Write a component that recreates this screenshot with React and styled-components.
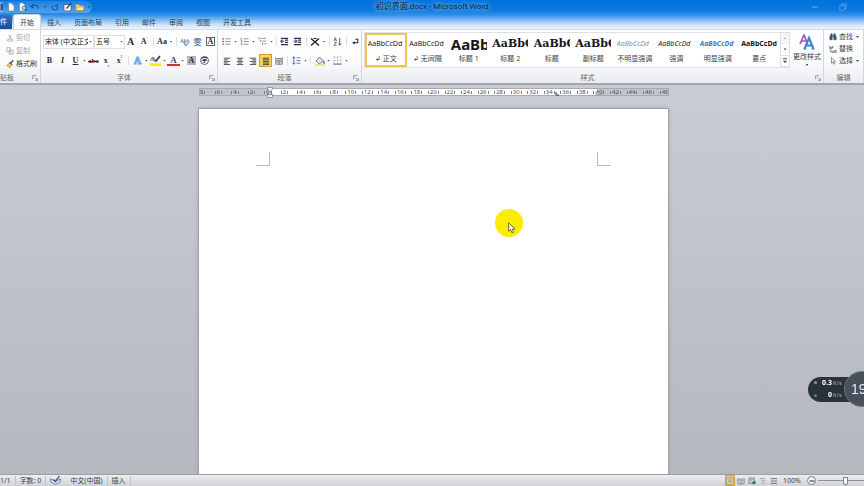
import React from 'react';
import styled, { createGlobalStyle, css } from 'styled-components';

const GlobalStyles = createGlobalStyle`
  * {
    box-sizing: border-box;
    margin: 0;
    padding: 0;
  }
  body {
    font-family: 'Noto Sans', 'Noto Sans CJK SC', sans-serif;
    font-size: 7px;
    line-height: 10px;
    color: #3b3f46;
    overflow: hidden;
  }
  button, select, input {
    font: inherit;
    color: inherit;
    border: none;
    background: none;
  }
  svg {
    display: block;
    flex: none;
  }
`

const TABS = ['插入', '页面布局', '引用', '邮件', '审阅', '视图', '开发工具'];

const STYLES = [
  { name: '↲ 正文', sample: 'AaBbCcDd', active: true },
  { name: '↲ 无间隔', sample: 'AaBbCcDd' },
  { name: '标题 1', sample: 'AaBb', look: 'heading' },
  { name: '标题 2', sample: 'AaBbC', look: 'serif' },
  { name: '标题', sample: 'AaBbC', look: 'serif' },
  { name: '副标题', sample: 'AaBbC', look: 'serif' },
  { name: '不明显强调', sample: 'AaBbCcDd', look: 'subtle' },
  { name: '强调', sample: 'AaBbCcDd', look: 'emphasis' },
  { name: '明显强调', sample: 'AaBbCcDd', look: 'intense' },
  { name: '要点', sample: 'AaBbCcDd', look: 'strong' },
];

const RULER = Array.from({ length: 29 }, (_, i) => Math.abs(i * 2 - 8));

/* Icons */

const Icon = ({ size = 10, children }) => (
  <svg width={size} height={size} viewBox="0 0 10 10" fill="none" stroke="#3f444c" strokeWidth="1" aria-hidden="true">
    {children}
  </svg>
)

const WordIcon = () => (
  <Icon><path d="M0 1h6v8H0z" fill="#2b579a" stroke="#fff" strokeWidth=".6" /></Icon>
)
const PageIcon = () => (
  <Icon><path d="M2.500 1h3.500l2 2v6H2.500z" fill="#fff" stroke="#6482a8" strokeWidth=".7" /><path d="M6 1v2h2" stroke="#6482a8" strokeWidth=".6" /></Icon>
)
const PreviewIcon = () => (
  <Icon>
    <path d="M1.500 1H5l2 2v6H1.500z" fill="#fff" stroke="#6482a8" strokeWidth=".7" />
    <circle cx="6" cy="6" r="1.800" fill="#d8ebff" stroke="#2c4a78" strokeWidth=".8" />
    <path d="M7.200 7.200L9 9" stroke="#2c4a78" />
  </Icon>
)
const UndoIcon = () => (
  <Icon><path d="M3 2L1 4.500l3 1.500M1.500 4.400C4 2.500 8.500 2.500 8 7" stroke="#1d4da6" strokeWidth="1.100" /></Icon>
)
const RedoIcon = () => (
  <Icon><path d="M3 3.500C1.500 6 3 8 5 8s3.500-2 2-4.500M7.500 2L7 4.200l-2-.4" stroke="#1d4da6" strokeWidth="1.100" /></Icon>
)
const EditIcon = () => (
  <Icon><path d="M1 2.500h7v6.500H1z" fill="#fff" stroke="#4a5f7d" strokeWidth=".8" /><path d="M3.500 6.500L8.500 1" stroke="#2d4460" strokeWidth="1.300" /><path d="M3 7.500l1-1.500" stroke="#d58a22" /></Icon>
)
const FolderIcon = () => (
  <Icon><path d="M.8 8.500V2.500h3l1 1h3v1.500" fill="#f6d983" stroke="#b98a2d" strokeWidth=".6" /><path d="M.8 8.500L2.500 5h7L8 8.500z" fill="#fde9a5" stroke="#b98a2d" strokeWidth=".6" /></Icon>
)
const CutIcon = () => (
  <Icon size={8}><path d="M3 1l3.500 6M7 1L3.500 7" stroke="#a4a7ad" /><circle cx="2.800" cy="8" r="1.300" stroke="#a4a7ad" /><circle cx="7.200" cy="8" r="1.300" stroke="#a4a7ad" /></Icon>
)
const CopyIcon = () => (
  <Icon size={8}><path d="M1 1h4.500v5H1zM4 4h5v5H4z" fill="#fff" stroke="#a4a7ad" /><path d="M5 6h3M5 7.500h3" stroke="#c0c2c7" strokeWidth=".6" /></Icon>
)
const BrushIcon = () => (
  <Icon size={8}><path d="M6 4L9 0" stroke="#45474b" strokeWidth="1.600" /><path d="M1 7l4-4 2.500 2L5 9.500 3.500 8.500z" fill="#f1cf57" stroke="#806422" strokeWidth=".7" /><path d="M4 3l4 3" stroke="#373a3f" strokeWidth="1.200" /></Icon>
)
const EraserIcon = () => (
  <Icon><path d="M4 6l3-3.500 2.500 2L6.500 8.500H5z" fill="#b8d1ee" stroke="#5d7fae" strokeWidth=".8" /><path d="M.8 6l1.400-4 1.400 4M1.300 4.500h1.800M4.500 2v3" stroke="#7c8492" strokeWidth=".8" /></Icon>
)
const HighlightIcon = () => (
  <Icon size={11}><path d="M0 7.500h10V10H0z" fill="#ffed00" stroke="none" /><path d="M5 6L9 1" stroke="#39404c" strokeWidth="1.600" /><path d="M.5 5.500C2 1 3 1 2.500 5M3.500 2v3.500c2 0 2-2 0-2" stroke="#50545b" strokeWidth=".8" /></Icon>
)
const BulletsIcon = () => (
  <Icon size={9}><path d="M3.500 2h6M3.500 5h6M3.500 8h6" stroke="#888c94" /><path d="M.5 2h1.500M.5 5h1.500M.5 8h1.500" stroke="#344b74" strokeWidth="1.400" /></Icon>
)
const NumbersIcon = () => (
  <Icon size={9}><path d="M4 2h5.500M4 5h5.500M4 8h5.500" stroke="#888c94" /><path d="M1.300 .8v2.400M.7 4.200h1.200v2M.7 7.500h1.300V9.500" stroke="#4b5a78" strokeWidth=".8" /></Icon>
)
const MultiIcon = () => (
  <Icon size={9}><path d="M3 1.500h6M5 4.500h4M7 7.500h2.500" stroke="#888c94" /><path d="M1.200 .5v2M3.200 3.500v2M5.200 6.500v2" stroke="#4b5a78" /></Icon>
)
const IndentIcon = ({ more }) => (
  <Icon size={9}>
    <path d="M1 1.500h8M5.500 3.500H9M5.500 6H9M1 8.500h8" stroke="#2f343c" strokeWidth="1.200" />
    <path d={more ? 'M.5 4.800h3M2.500 3l2 1.800-2 1.800' : 'M4.800 4.800h-3M2.800 3l-2 1.800 2 1.800'} stroke="#2d4f8d" strokeWidth="1.200" />
  </Icon>
)
const AsianIcon = () => (
  <Icon><path d="M1 1.500l8 7M9 1.500l-8 7" stroke="#24272c" strokeWidth="1.500" /><path d="M3.500 1.500h3" stroke="#24272c" /></Icon>
)
const SortIcon = () => (
  <Icon size={9}><path d="M1 4.500L2.500.8 4 4.500M1.500 3.200h2M1 6h3L1 9.300h3" stroke="#4a5c7c" strokeWidth=".9" /><path d="M7.500 1v8M6 7.500L7.500 9 9 7.500" /></Icon>
)
const MarkIcon = () => (
  <Icon size={8}><path d="M5.500 1.500h3V6H3" stroke="#24272c" strokeWidth="1.300" /><path d="M4.500 4L1.500 6l3 2.200z" fill="#24272c" stroke="none" /></Icon>
)
const LINES = {
  left: 'M1 1.500h8M1 3.500h5M1 5.500h8M1 7.500h5M1 9.300h8',
  center: 'M1 1.500h8M2.500 3.500h5M1 5.500h8M2.500 7.500h5M1 9.300h8',
  right: 'M1 1.500h8M4 3.500h5M1 5.500h8M4 7.500h5M1 9.300h8',
  justify: 'M1 1.500h8M1 3.500h8M1 5.500h8M1 7.500h8M1 9.300h8',
};
const AlignIcon = ({ kind }) => <Icon size={8}><path d={LINES[kind]} stroke="#3a3d42" strokeWidth="1.100" /></Icon>
const SpreadIcon = () => (
  <Icon size={8}><path d="M1 .5v9M9 .5v9M2 2h6M2 4h6M2 6h6M2 9h6" stroke="#4b4f56" /><path d="M3.500 7.500h3" stroke="#3565ad" /></Icon>
)
const SpacingIcon = () => (
  <Icon size={9}><path d="M5 2h4.500M5 5h4.500M5 8h4.500" stroke="#70747c" /><path d="M2 1v8M.5 2.500L2 .8l1.500 1.700M.5 7.500L2 9.200l1.500-1.700" stroke="#33589b" strokeWidth=".9" /></Icon>
)
const FillIcon = () => (
  <Icon><path d="M1 5l3.500-4L8 4.500 4.500 8z" fill="#dce5f1" stroke="#4f617d" strokeWidth=".8" /><path d="M8 5c2 2 1 3 .5 3" stroke="#2f61b0" strokeWidth="1.200" /><path d="M0 9h9.500" stroke="#f1d77a" strokeWidth="1.500" /></Icon>
)
const BordersIcon = () => (
  <Icon size={9}><path d="M1 1h8v8M1 1v8M5 1v8M1 5h8" stroke="#a7abb3" strokeDasharray="1 .7" strokeWidth=".9" /><path d="M.5 9h9" stroke="#4b4f56" /></Icon>
)
const FindIcon = () => (
  <Icon size={8}><path d="M1 8.500V5l1.500-4h1.500v7.500zM6 8.500V1h1.500L9 5v3.500z" fill="#3a5480" stroke="#24416e" strokeWidth=".6" /><path d="M4 4h2" stroke="#24416e" strokeWidth="1.600" /></Icon>
)
const ReplaceIcon = () => (
  <Icon size={8}><path d="M1 1v4h2.500V3H1M5.500 1.500H4.500v2h1M2 6.500v2h3M4 7l1.500 1.500L4 9.800M6.500 7v2.500H9V7z" stroke="#4b5567" strokeWidth=".9" /></Icon>
)
const SelectIcon = () => (
  <Icon size={8}><path d="M3 .8v7l1.800-1.500L6 9l1.200-.6L6 5.800h2.200z" fill="#fff" stroke="#4b5567" strokeWidth=".8" /></Icon>
)
const LauncherIcon = () => (
  <Icon size={6}><path d="M1 7V1h6" stroke="#6d7179" /><path d="M4 4l5 5M9 5v4H5" stroke="#6d7179" /></Icon>
)
const ProofIcon = () => (
  <Icon size={11}><path d="M.5 6L5 8.500 9.500 6V3.500L5 6 .5 3.500z" fill="#e8edf6" stroke="#49658f" strokeWidth=".7" /><path d="M3 4l1.800 1.800L8.500 1" stroke="#2a5eb2" strokeWidth="1.200" /></Icon>
)
const PrintViewIcon = () => <Icon size={8}><path d="M1 1h8v8H1z" fill="#f6efd8" stroke="#7b7769" /><path d="M2.500 3.500h5M2.500 5h5M2.500 6.500h5" stroke="#6b6a63" strokeWidth=".8" /></Icon>
const ReadingIcon = () => <Icon size={8}><path d="M1 2l4 1 4-1v6L5 9 1 8zM5 3v6M2 4.500l2 .5M6 5l2-.5" stroke="#7a7e86" /></Icon>
const WebIcon = () => <Icon size={8}><path d="M1 1h7v7H1zM2 3h5M2 5h3" stroke="#7a7e86" /><circle cx="7.500" cy="7" r="2" fill="#2f8a62" stroke="#2c6c8d" strokeWidth=".6" /></Icon>
const OutlineIcon = () => <Icon size={8}><path d="M1 2h6M3 5h5M3 8h4" stroke="#8c9098" /></Icon>
const DraftIcon = () => <Icon size={8}><path d="M1 2h8M1 5h8M1 8h8" stroke="#6d7179" strokeWidth="1.200" /></Icon>

/* Ribbon pieces */

const Tool = ({ label, children, caret, ...rest }) => (
  <ToolButton aria-label={label} {...rest}>
    <Glyph>{children}</Glyph>
    {caret && <Caret />}
  </ToolButton>
)

const Group = ({ title, launcher, children, ...rest }) => (
  <GroupBox aria-label={title} {...rest}>
    <GroupBody>{children}</GroupBody>
    <GroupFooter $launcher={launcher}>
      <span>{title}</span>
      {launcher && <Launcher aria-label={`${title}选项`}><LauncherIcon /></Launcher>}
    </GroupFooter>
  </GroupBox>
)

const Clipboard = () => (
  <GroupBox aria-label="剪贴板" $width={41}>
    <CommandList $indent={6} $gap={3}>
      <Command disabled><CutIcon />剪切</Command>
      <Command disabled><CopyIcon />复制</Command>
      <Command><BrushIcon />格式刷</Command>
    </CommandList>
    <GroupFooter $align="flex-start">
      <span>贴板</span>
      <Launcher aria-label="剪贴板选项"><LauncherIcon /></Launcher>
    </GroupFooter>
  </GroupBox>
)

const FontGroup = () => (
  <Group title="字体" launcher $width={177}>
    <ToolRow>
      <Combo $width={51}>
        <select aria-label="字体"><option>宋体 (中文正文)</option></select>
        <Caret />
      </Combo>
      <Combo $width={31}>
        <select aria-label="字号"><option>五号</option></select>
        <Caret />
      </Combo>
      <Tool label="增大字体"><Letter $size={10}>A<sup>ˆ</sup></Letter></Tool>
      <Tool label="缩小字体"><Letter $size={8}>A<sup>ˇ</sup></Letter></Tool>
      <Divider />
      <Tool label="更改大小写" caret><Letter $size={8}>Aa</Letter></Tool>
      <Divider />
      <Tool label="清除格式"><EraserIcon /></Tool>
      <Tool label="拼音指南"><Pinyin>雯</Pinyin></Tool>
      <Tool label="字符边框"><Boxed>A</Boxed></Tool>
    </ToolRow>
    <ToolRow>
      <Tool label="加粗"><Letter $size={8}>B</Letter></Tool>
      <Tool label="倾斜"><Letter $size={8} $italic>I</Letter></Tool>
      <Tool label="下划线" caret><Letter $size={8} $line="underline">U</Letter></Tool>
      <Tool label="删除线"><Letter $size={7} $line="line-through">abc</Letter></Tool>
      <Tool label="下标"><Letter $size={8}>x<sub>₂</sub></Letter></Tool>
      <Tool label="上标"><Letter $size={8}>x<sup>²</sup></Letter></Tool>
      <Divider />
      <Tool label="文本效果" caret><Letter $size={10} $effect>A</Letter></Tool>
      <Tool label="突出显示" caret><HighlightIcon /></Tool>
      <Tool label="字体颜色" caret><Letter $size={9} $bar="#e3282e">A</Letter></Tool>
      <Tool label="字符底纹"><Boxed $shaded>A</Boxed></Tool>
      <Tool label="带圈字符"><Boxed $round>字</Boxed></Tool>
    </ToolRow>
  </Group>
)

const ParagraphGroup = () => (
  <Group title="段落" launcher $width={144}>
    <ToolRow>
      <Tool label="项目符号" caret><BulletsIcon /></Tool>
      <Tool label="编号" caret><NumbersIcon /></Tool>
      <Tool label="多级列表" caret><MultiIcon /></Tool>
      <Divider />
      <Tool label="减少缩进量"><IndentIcon /></Tool>
      <Tool label="增加缩进量"><IndentIcon more /></Tool>
      <Divider />
      <Tool label="中文版式" caret><AsianIcon /></Tool>
      <Divider />
      <Tool label="排序"><SortIcon /></Tool>
      <Divider />
      <Tool label="显示编辑标记"><MarkIcon /></Tool>
    </ToolRow>
    <ToolRow>
      <Tool label="左对齐"><AlignIcon kind="left" /></Tool>
      <Tool label="居中"><AlignIcon kind="center" /></Tool>
      <Tool label="右对齐"><AlignIcon kind="right" /></Tool>
      <Tool label="两端对齐" $active><AlignIcon kind="justify" /></Tool>
      <Tool label="分散对齐"><SpreadIcon /></Tool>
      <Divider />
      <Tool label="行距" caret><SpacingIcon /></Tool>
      <Divider />
      <Tool label="底纹" caret><FillIcon /></Tool>
      <Tool label="边框" caret><BordersIcon /></Tool>
    </ToolRow>
  </Group>
)

const StylesGroup = () => (
  <Group title="样式" launcher $grow>
    <StylesBody>
      <Gallery>
        {STYLES.map(({ name, sample, look, active }) => (
          <StyleCard key={name} $active={active}>
            <Sample $look={look}>{sample}</Sample>
            <StyleName>{name}</StyleName>
          </StyleCard>
        ))}
        <Scroller>
          <ScrollButton aria-label="上一行" disabled><Caret $up /></ScrollButton>
          <ScrollButton aria-label="下一行"><Caret /></ScrollButton>
          <ScrollButton aria-label="更多样式"><Caret $more /></ScrollButton>
        </Scroller>
      </Gallery>
      <ChangeStyles>
        <svg width="16" height="16" viewBox="0 0 16 16" fill="none" aria-hidden="true">
          <path d="M1 10L5 1l3.500 9M2.500 7h5" stroke="#a45ab4" strokeWidth="1.700" />
          <path d="M5.500 15l4.500-11 4.500 11M7 11.500h6" stroke="#3f7fd0" strokeWidth="2" />
          <path d="M4.500 15h3M12.500 15h3" stroke="#3f7fd0" />
        </svg>
        更改样式
        <Caret />
      </ChangeStyles>
    </StylesBody>
  </Group>
)

const EditingGroup = () => (
  <GroupBox aria-label="编辑" $width={40}>
    <CommandList $indent={5} $gap={2}>
      <Command><FindIcon />查找<Caret /></Command>
      <Command><ReplaceIcon />替换</Command>
      <Command><SelectIcon />选择<Caret /></Command>
    </CommandList>
    <GroupFooter>
      <span>编辑</span>
    </GroupFooter>
  </GroupBox>
)

const App = () => (
  <>
    <GlobalStyles />
    <Window>
      <Header>
        <TitleBar>
          <QuickAccess>
            <Quick aria-label="Word"><WordIcon /></Quick>
            <Quick aria-label="新建"><PageIcon /></Quick>
            <Quick aria-label="打印预览"><PreviewIcon /></Quick>
            <Quick aria-label="撤消"><UndoIcon /></Quick>
            <Caret />
            <Quick aria-label="恢复"><RedoIcon /></Quick>
            <Quick aria-label="编辑"><EditIcon /></Quick>
            <Quick aria-label="打开"><FolderIcon /></Quick>
            <Caret />
          </QuickAccess>
          <Title>初识界面.docx - Microsoft Word</Title>
          <WindowButtons>
            <WindowButton aria-label="最小化"><Icon size={8}><path d="M1 5h8" stroke="#78baf5" /></Icon></WindowButton>
            <WindowButton aria-label="还原"><Icon size={8}><path d="M1 3h6v6H1zM3 3V1h6v6H7" stroke="#5aa9ef" /></Icon></WindowButton>
          </WindowButtons>
        </TitleBar>
        <TabBar>
          <FileTab>件</FileTab>
          <Tab $selected>开始</Tab>
          {TABS.map((tab) => <Tab key={tab}>{tab}</Tab>)}
        </TabBar>
      </Header>
      <Ribbon>
        <Clipboard />
        <FontGroup />
        <ParagraphGroup />
        <StylesGroup />
        <EditingGroup />
      </Ribbon>
      <Workspace>
        <Ruler>
          <Ticks>{RULER.map((n, i) => <Tick key={i}>{n}</Tick>)}</Ticks>
          <IndentMarker viewBox="0 0 8 11">
            <path d="M1.500 .5h5V2L4 4.500 1.500 2zM4 5l2.500 2.500H1.500zM1.500 7.500h5v3h-5z" fill="#f5f6f8" stroke="#777b83" strokeWidth=".7" />
          </IndentMarker>
          <RightMarker viewBox="0 0 8 11">
            <path d="M4 5l2.500 2.500H1.500z" fill="#d5d8dd" stroke="#8b8f97" strokeWidth=".7" />
          </RightMarker>
          <TabMarker viewBox="0 0 4 4"><path d="M1 0v3h3" stroke="#33363b" fill="none" /></TabMarker>
        </Ruler>
        <Paper>
          <Crop $side="right" />
          <Crop $side="left" />
        </Paper>
        <Spotlight>
          <svg width="8" height="12" viewBox="0 0 8 12" aria-hidden="true">
            <path d="M.6 .8v8.400l2-1.800 1.500 3.600 1.500-.7-1.500-3.300h3z" fill="#fff" stroke="#4d4717" strokeWidth=".8" />
          </svg>
        </Spotlight>
      </Workspace>
      <StatusBar>
        <StatusItem>1/1</StatusItem>
        <StatusItem>字数: 0</StatusItem>
        <StatusItem $plain><ProofIcon /></StatusItem>
        <StatusItem>中文(中国)</StatusItem>
        <StatusItem>插入</StatusItem>
        <Views>
          <View aria-label="页面视图" $active><PrintViewIcon /></View>
          <View aria-label="阅读版式"><ReadingIcon /></View>
          <View aria-label="Web 版式"><WebIcon /></View>
          <View aria-label="大纲"><OutlineIcon /></View>
          <View aria-label="草稿"><DraftIcon /></View>
        </Views>
        <Zoom>
          <ZoomLabel htmlFor="zoom">100%</ZoomLabel>
          <ZoomOut aria-label="缩小"><Icon size={6}><path d="M1 5h8" strokeWidth="2" /></Icon></ZoomOut>
          <Slider id="zoom" type="range" min="10" max="160" defaultValue="100" />
        </Zoom>
      </StatusBar>
      <NetWidget>
        <Speeds>
          <Speed $color="#4fa6dc"><i />0.3<small>K/s</small></Speed>
          <Speed $color="#3f9a53"><i />0<small>K/s</small></Speed>
        </Speeds>
        <Dial>19</Dial>
      </NetWidget>
    </Window>
  </>
)

export default App;

const Window = styled.div`
  display: flex;
  flex-direction: column;
  height: 100vh;
  overflow: hidden;
`

const Header = styled.header`
  background: linear-gradient(#0072dc 0, #0a78de 10px, #2f8fe7 15px, #82bdf2 20px, #cfe4f9 25px, #edf5fc 29px);
`

const TitleBar = styled.div`
  display: grid;
  grid-template-columns: 1fr auto 1fr;
  align-items: center;
  height: 14px;
`

const QuickAccess = styled.div`
  display: flex;
  align-items: center;
  gap: 3px;
  width: 92px;
  height: 12px;
  background: linear-gradient(#1a80e2, #4fa2ec);
  border-radius: 0 6px 6px 0;
`

const Quick = styled.button`
  flex: 0 1 10px;
  min-width: 0;
  overflow: hidden;
  &:first-child {
    flex-basis: 3px;
  }
`

const Title = styled.h1`
  font-family: Roboto, 'Noto Sans CJK SC', sans-serif;
  font-size: 8px;
  font-weight: 400;
  line-height: 12px;
  color: #0c2238;
  text-shadow: 0 0 4px #8cc4f6, 0 0 6px #8cc4f6;
`

const WindowButtons = styled.div`
  display: flex;
  justify-content: flex-end;
  gap: 20px;
  padding-right: 17px;
`

const WindowButton = styled.button`
  width: 8px;
`

const TabBar = styled.nav`
  display: flex;
  align-items: flex-end;
  gap: 1px;
  height: 15px;
`

const Tab = styled.button`
  height: 14px;
  padding: 1px 6px 0;
  white-space: nowrap;
  color: #2d4055;
  ${({ $selected }) => $selected && css`
    background: #fdfdfe;
    box-shadow: 0 0 0 1px #c3d3e4;
    border-radius: 2px 2px 0 0;
  `}
`

const FileTab = styled.button`
  display: flex;
  align-items: center;
  width: 12px;
  height: 14px;
  margin-right: 1px;
  color: #fff;
  background: linear-gradient(#2f6ac4, #1b4fa5);
  border-radius: 0 2px 0 0;
`

const Ribbon = styled.section`
  display: flex;
  height: 56px;
  background: linear-gradient(#fff, #fbfbfc 60%, #e9ebee);
  border-top: 1px solid #d6dce4;
  border-bottom: 2px solid #a3a7ad;
`

const GroupBox = styled.section`
  display: flex;
  flex-direction: column;
  flex: ${({ $grow, $width }) => ($grow ? '1 1 0' : `0 0 ${$width}px`)};
  min-width: 0;
  border-right: 1px solid #d3d6da;
`

const GroupBody = styled.div`
  display: flex;
  flex-direction: column;
  flex: 1;
  padding: 2px 0 0 2px;
`

const GroupFooter = styled.footer`
  display: flex;
  justify-content: ${({ $align }) => $align || 'center'};
  align-items: center;
  position: relative;
  height: 10px;
  padding-right: ${({ $launcher }) => ($launcher ? 10 : 0)}px;
  color: #62666d;
`

const Launcher = styled.button`
  position: absolute;
  right: 2px;
  top: 2px;
`

const CommandList = styled.div`
  display: flex;
  flex-direction: column;
  gap: ${({ $gap }) => $gap}px;
  flex: 1;
  padding: ${({ $gap }) => $gap}px 0 0 ${({ $indent }) => $indent}px;
`

const Command = styled.button`
  display: flex;
  align-items: center;
  gap: 2px;
  white-space: nowrap;
  &:disabled {
    color: #a4a7ad;
  }
`

const ToolRow = styled.div`
  display: flex;
  align-items: center;
  height: 19px;
`

const ToolButton = styled.button`
  display: flex;
  align-items: center;
  height: 13px;
  flex: none;
  ${({ $active }) => $active && css`
    background: #fbd257;
    box-shadow: inset 0 0 0 1px #d19c2c;
  `}
`

const Glyph = styled.span`
  display: flex;
  align-items: center;
  justify-content: center;
  width: 13px;
  height: 13px;
`

const Caret = styled.i`
  flex: none;
  width: 3px;
  height: 2px;
  margin: 0 1px;
  background: #4b4f56;
  clip-path: ${({ $up }) => ($up ? 'polygon(50% 0, 100% 100%, 0 100%)' : 'polygon(0 0, 100% 0, 50% 100%)')};
  ${({ $more }) => $more && css`
    width: 4px;
    height: 5px;
    clip-path: polygon(0 0, 100% 0, 100% 20%, 0 20%, 0 50%, 100% 50%, 50% 100%, 0 50%);
  `}
`

const Divider = styled.i`
  width: 1px;
  height: 9px;
  margin: 0 2px;
  background: #dcdfe3;
`

const Combo = styled.div`
  display: flex;
  align-items: center;
  flex: none;
  width: ${({ $width }) => $width}px;
  height: 14px;
  border: 1px solid #dcdfe4;
  background: #fff;
  select {
    appearance: none;
    flex: 1;
    min-width: 0;
    height: 12px;
    padding-left: 1px;
    color: #222;
    text-overflow: clip;
  }
`

const Letter = styled.span`
  font-family: 'Liberation Serif', serif;
  font-size: ${({ $size }) => $size}px;
  font-weight: bold;
  font-style: ${({ $italic }) => ($italic ? 'italic' : 'normal')};
  text-decoration: ${({ $line }) => $line || 'none'};
  line-height: 10px;
  color: #2b2e33;
  sup, sub {
    font-size: 5px;
    line-height: 0;
  }
  ${({ $effect }) => $effect && css`
    color: #e8f3fd;
    -webkit-text-stroke: 1px #6ba3d9;
  `}
  ${({ $bar }) => $bar && css`
    padding: 0 3px;
    color: #2c4c82;
    line-height: 8px;
    border-bottom: 2px solid ${$bar};
  `}
`

const Pinyin = styled.span`
  font-size: 8px;
  color: #284f8d;
`

const Boxed = styled.span`
  width: 9px;
  height: 9px;
  font-family: 'Liberation Serif', 'Noto Sans CJK SC', serif;
  font-size: ${({ $round }) => ($round ? 6 : 8)}px;
  font-weight: bold;
  line-height: 7px;
  text-align: center;
  color: #2b2e33;
  border: 1px solid ${({ $shaded }) => ($shaded ? '#b3b6bb' : '#5b6675')};
  border-radius: ${({ $round }) => ($round ? '50%' : 0)};
  background: ${({ $shaded }) => ($shaded ? '#b3b6bb' : 'transparent')};
`

const StylesBody = styled.div`
  display: flex;
  gap: 1px;
`

const Gallery = styled.div`
  display: flex;
  flex: 1;
  min-width: 0;
  height: 36px;
  background: #fff;
  border: 1px solid #dde0e4;
`

const StyleCard = styled.button`
  display: flex;
  flex-direction: column;
  align-items: center;
  flex: 1 1 0;
  min-width: 0;
  height: 34px;
  border: 2px solid ${({ $active }) => ($active ? '#edc35a' : 'transparent')};
`

const looks = {
  heading: css`
    font-size: 15px;
    font-weight: bold;
  `,
  serif: css`
    font-family: 'DejaVu Serif', serif;
    font-size: 11px;
    font-weight: bold;
  `,
  subtle: css`
    font-style: italic;
    color: #8b8e93;
  `,
  emphasis: css`
    font-style: italic;
  `,
  intense: css`
    font-style: italic;
    font-weight: bold;
    color: #4178be;
  `,
  strong: css`
    font-weight: bold;
  `,
};

const Sample = styled.span`
  width: 36px;
  height: 19px;
  overflow: hidden;
  font-size: 7px;
  line-height: 18px;
  text-align: left;
  white-space: nowrap;
  color: #16181b;
  ${({ $look }) => looks[$look]}
`

const StyleName = styled.span`
  white-space: nowrap;
`

const Scroller = styled.div`
  display: flex;
  flex-direction: column;
  width: 9px;
  border-left: 1px solid #dde0e4;
`

const ScrollButton = styled.button`
  display: flex;
  align-items: center;
  justify-content: center;
  flex: 1;
  border-bottom: 1px solid #dde0e4;
  &:disabled {
    background: #eceef0;
    opacity: .5;
  }
`

const ChangeStyles = styled.button`
  display: flex;
  flex-direction: column;
  align-items: center;
  gap: 2px;
  width: 32px;
  padding-top: 2px;
  white-space: nowrap;
`

const Workspace = styled.main`
  position: relative;
  display: flex;
  flex-direction: column;
  align-items: center;
  flex: 1;
  min-height: 0;
  padding: 3px 0 0 3px;
  background: linear-gradient(#c9ccd4, #b5b8bf);
`

const Ruler = styled.div`
  position: relative;
  width: 470px;
  max-width: 100%;
  height: 8px;
  border: 1px solid #a7abb3;
  background: linear-gradient(90deg, #bfc3cb 71px, #fff 71px, #fff calc(100% - 71px), #bfc3cb calc(100% - 71px));
`

const Ticks = styled.div`
  display: flex;
  height: 6px;
  margin: 0 -6px;
  clip-path: inset(0 6px);
`

const Tick = styled.span`
  display: flex;
  align-items: center;
  justify-content: center;
  flex: 1 1 0;
  min-width: 0;
  font-size: 6px;
  line-height: 6px;
  color: #4b4f56;
  gap: 1px;
  &::before, &::after {
    content: '';
    width: 1px;
    height: 3px;
    background: #7d8189;
  }
`

const IndentMarker = styled.svg`
  position: absolute;
  left: 66px;
  top: -2px;
  width: 8px;
  height: 11px;
`

const RightMarker = styled.svg`
  position: absolute;
  right: 66px;
  top: -2px;
  width: 8px;
  height: 11px;
`

const TabMarker = styled.svg`
  position: absolute;
  right: 109px;
  top: 3px;
  width: 4px;
  height: 4px;
`

const Paper = styled.article`
  display: flex;
  justify-content: space-between;
  flex: 1;
  width: 469px;
  max-width: 100%;
  margin-top: 13px;
  padding: 43px 57px 0;
  background: #fff;
  box-shadow: 0 0 0 1px #a0a3aa, 0 0 4px #8b8e95;
`

const Crop = styled.i`
  width: 14px;
  height: 14px;
  border-bottom: 1px solid #b9bbbf;
  border-${({ $side }) => $side}: 1px solid #b9bbbf;
`

const Spotlight = styled.div`
  position: absolute;
  left: calc(50% + 63px);
  top: 124px;
  display: flex;
  justify-content: center;
  width: 28px;
  height: 28px;
  padding: 13px 0 0 5px;
  border-radius: 50%;
  background: #fcec00;
`

const StatusBar = styled.footer`
  position: relative;
  display: flex;
  align-items: center;
  height: 12px;
  background: linear-gradient(#eceef0, #cfd2d7);
  border-top: 1px solid #9b9fa6;
`

const StatusItem = styled.span`
  display: flex;
  align-items: center;
  padding: 0 4px;
  white-space: nowrap;
  border-right: 1px solid ${({ $plain }) => ($plain ? 'transparent' : '#bfc2c8')};
  &:first-child {
    padding-left: 0;
  }
`

const Views = styled.div`
  display: flex;
  gap: 1px;
  margin-left: auto;
`

const View = styled.button`
  display: flex;
  align-items: center;
  justify-content: center;
  width: 10px;
  height: 11px;
  ${({ $active }) => $active && css`
    background: #fbd86e;
    box-shadow: inset 0 0 0 1px #d6a33a;
  `}
`

const Zoom = styled.div`
  display: flex;
  align-items: center;
  gap: 2px;
  padding-left: 4px;
`

const ZoomLabel = styled.label`
  width: 22px;
`

const ZoomOut = styled.button`
  display: flex;
  align-items: center;
  justify-content: center;
  width: 9px;
  height: 9px;
  border: 1px solid #7d818a;
  border-radius: 50%;
  background: #f5f6f8;
`

const Slider = styled.input`
  appearance: none;
  width: 46px;
  height: 9px;
  background: linear-gradient(#8f939b, #8f939b) center / 100% 1px no-repeat;
  &::-webkit-slider-thumb {
    appearance: none;
    width: 5px;
    height: 8px;
    border: 1px solid #7d818a;
    border-radius: 1px 1px 3px 3px;
    background: #fafbfc;
  }
`

const NetWidget = styled.aside`
  position: fixed;
  right: -16px;
  top: 371px;
  display: flex;
  align-items: center;
`

const Speeds = styled.div`
  display: flex;
  flex-direction: column;
  justify-content: space-around;
  width: 46px;
  height: 25px;
  margin-right: -10px;
  padding-left: 6px;
  border-radius: 13px 0 0 13px;
  background: #2c323b;
  color: #fff;
`

const Speed = styled.span`
  display: grid;
  grid-template-columns: 3px 14px auto;
  align-items: center;
  column-gap: 1px;
  font-weight: bold;
  text-align: right;
  i {
    width: 3px;
    height: 3px;
    border-radius: 50%;
    background: ${({ $color }) => $color};
  }
  small {
    font-size: 6px;
    font-weight: normal;
    text-align: left;
    color: #a9afb8;
  }
`

const Dial = styled.div`
  width: 36px;
  height: 36px;
  padding-left: 6px;
  border-radius: 50%;
  border: 1px solid #6d747e;
  background: #48505b;
  color: #e6eaef;
  font-family: 'Liberation Sans', sans-serif;
  font-size: 14px;
  line-height: 34px;
  z-index: 1;
`
